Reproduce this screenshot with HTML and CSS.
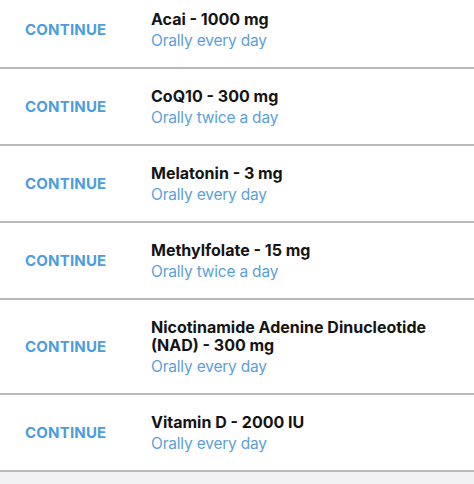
FILE: index.html
```html
<!DOCTYPE html>
<html>
<head>
<meta charset="utf-8">
<link rel="stylesheet" href="styles.css">
</head>
<body>
<ul class="list">
  <li class="row">
    <span class="action">CONTINUE</span>
    <div class="info"><div class="title">Acai - 1000 mg</div><div class="sub">Orally every day</div></div>
  </li>
  <li class="row">
    <span class="action">CONTINUE</span>
    <div class="info"><div class="title">CoQ10 - 300 mg</div><div class="sub">Orally twice a day</div></div>
  </li>
  <li class="row">
    <span class="action">CONTINUE</span>
    <div class="info"><div class="title">Melatonin - 3 mg</div><div class="sub">Orally every day</div></div>
  </li>
  <li class="row">
    <span class="action">CONTINUE</span>
    <div class="info"><div class="title">Methylfolate - 15 mg</div><div class="sub">Orally twice a day</div></div>
  </li>
  <li class="row">
    <span class="action">CONTINUE</span>
    <div class="info"><div class="title">Nicotinamide Adenine Dinucleotide (NAD) - 300 mg</div><div class="sub">Orally every day</div></div>
  </li>
  <li class="row">
    <span class="action">CONTINUE</span>
    <div class="info"><div class="title">Vitamin D - 2000 IU</div><div class="sub">Orally every day</div></div>
  </li>
</ul>
</body>
</html>
```

FILE: styles.css
```css
html, body {
  margin: 0;
  padding: 0;
  background: #f2f2f5;
  font-family: Inter, "Noto Sans", sans-serif;
  height: 100%;
}
.list {
  list-style: none;
  margin: -8px 0 0 0;
  padding: 0;
  background: #ffffff;
}
.row {
  display: flex;
  align-items: center;
  padding: 18px 16px 15px 0;
  border-bottom: 2px solid #b9b9bb;
}
.action {
  width: 126px;
  flex: none;
  padding-left: 25px;
  margin-bottom: 4px;
  font-size: 15px;
  font-weight: 700;
  color: #4b9de0;
  letter-spacing: 0.2px;
}
.info {
  flex: 1;
}
.title {
  font-size: 16px;
  line-height: 18px;
  font-weight: 700;
  color: #141414;
}
.sub {
  margin-top: 2px;
  font-size: 15.5px;
  line-height: 22px;
  letter-spacing: -0.2px;
  color: #5d9fd8;
}
```
